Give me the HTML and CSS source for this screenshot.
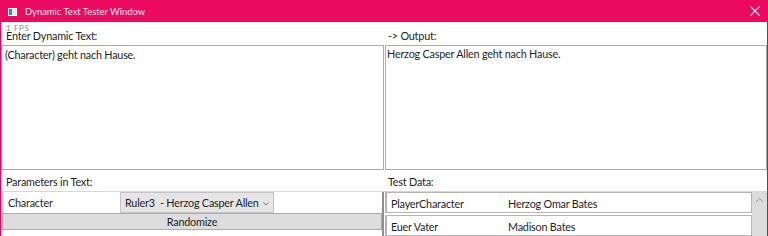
FILE: index.html
```html
<!DOCTYPE html>
<html>
<head>
<meta charset="utf-8">
<link rel="stylesheet" href="styles.css">
</head>
<body>
<div class="window">
  <div class="titlebar">
    <svg class="appicon" width="9" height="8" viewBox="0 0 9 8">
      <rect x="0.5" y="0.5" width="8" height="7" fill="#dfe9ec" stroke="#ffffff"/>
      <rect x="1" y="1" width="3" height="6" fill="#3b8f8a"/>
    </svg>
    <span class="title">Dynamic Text Tester Window</span>
    <svg class="close" width="10" height="10" viewBox="0 0 10 10">
      <path d="M0.5 0.5 L9.5 9.5 M9.5 0.5 L0.5 9.5" stroke="#ffe4ee" stroke-width="1.1"/>
    </svg>
  </div>
  <div class="content">
    <div class="fps">1 FPS</div>
    <div class="grid">
      <div class="label">Enter Dynamic Text:</div>
      <div class="label right">-&gt; Output:</div>
      <div class="textbox focused">(Character) geht nach Hause.</div>
      <div class="textbox out">Herzog Casper Allen geht nach Hause.</div>
      <div class="label2">Parameters in Text:</div>
      <div class="label2 right">Test Data:</div>
      <div class="params">
        <div class="paramrow">
          <div class="pname">Character</div>
          <div class="combo"><span>Ruler3&nbsp; - Herzog Casper Allen</span>
            <svg class="chev" width="6" height="4" viewBox="0 0 6 4"><path d="M0.5 0.5 L3 3 L5.5 0.5" fill="none" stroke="#777" stroke-width="1"/></svg>
          </div>
        </div>
        <div class="btn">Randomize</div>
      </div>
      <div class="data">
        <div class="list">
          <div class="row sel"><span class="k">PlayerCharacter</span><span class="v">Herzog Omar Bates</span></div>
          <div class="row"><span class="k">Euer Vater</span><span class="v">Madison Bates</span></div>
        </div>
        <div class="scroll">
          <svg width="9" height="6" viewBox="0 0 9 6"><path d="M1 5 L4.5 1.5 L8 5" fill="none" stroke="#9a9a9a" stroke-width="1"/></svg>
        </div>
      </div>
    </div>
  </div>
</div>
</body>
</html>
```
FILE: styles.css
```css
* { box-sizing: border-box; }
html, body { margin: 0; padding: 0; }
body { width: 768px; height: 236px; overflow: hidden; background: #fff;
  font-family: "Lato", "Noto Sans", sans-serif; font-size: 10.8px; letter-spacing: -0.2px; color: #1e1e1e; }
.window { width: 768px; height: 236px; border-left: 1px solid #e8005e; border-right: 1px solid #e8005e;
  display: flex; flex-direction: column; background: #fff; }
.titlebar { height: 22px; background: #ea0a5f; display: flex; align-items: center; padding-left: 8px; flex: none; margin: 0 -1px; }
.appicon { flex: none; margin-top: 1px; }
.title { color: #ffe6ee; margin-left: 8px; font-size: 9.4px; letter-spacing: 0; }
.close { margin-left: auto; margin-right: 8px; }
.content { position: relative; flex: 1; }
.fps { position: absolute; left: 5px; top: 1px; font-size: 8px; color: #8a8a8a; letter-spacing: 0.6px; }
.grid { display: grid; grid-template-columns: 383px 383px; grid-template-rows: 23px 125px 22px 44px; }
.label { padding: 7px 0 0 5px; line-height: 14px; white-space: nowrap; }
.label.right { padding-left: 4px; }
.textbox { border: 1px solid #abadb3; padding: 2px 3px; line-height: 14px; white-space: nowrap; }
.textbox.focused { border-color: #7eb4ea; }
.textbox.out { margin-left: 1px; padding-left: 1px; padding-top: 1px; }
.label2 { padding: 5px 0 0 5px; line-height: 14px; border-bottom: 1px solid #d6d6d6; white-space: nowrap; }
.label2.right { padding-left: 4px; }
.params { padding-left: 1px; border-right: 2px solid #8f8f8f; }
.paramrow { display: flex; height: 21px; border-left: 1px solid #c8c8c8; }
.pname { width: 117px; padding: 4px 0 0 5px; line-height: 14px; }
.combo { width: 154px; height: 21px; background: #e5e5e5; border: 1px solid #c4c4c4; display: flex;
  padding: 3px 0 0 4px; line-height: 14px; white-space: nowrap; }
.chev { margin-left: auto; margin-right: 4px; margin-top: 6px; flex: none; }
.btn { height: 17px; background: #dddddd; border: 1px solid #acacac; text-align: center; line-height: 15px; white-space: nowrap; }
.data { display: flex; padding-left: 1px; }
.list { flex: 1; display: flex; flex-direction: column; gap: 2px; }
.row { height: 22px; display: flex; border: 1px solid #b5b5b5; border-left-width: 2px; line-height: 14px; padding: 4px 0 0 4px; white-space: nowrap; }
.row .k { width: 117px; }
.scroll { width: 15px; background: #dcdcdc; display: flex; justify-content: center; padding-top: 5px; }
```
